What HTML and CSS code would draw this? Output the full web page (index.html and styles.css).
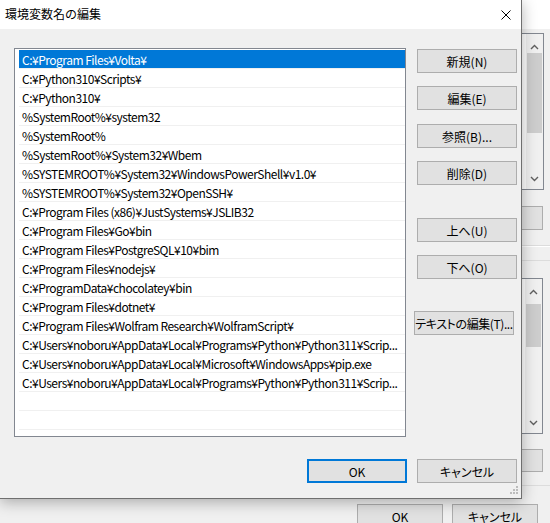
FILE: index.html
```html
<!DOCTYPE html>
<html lang="ja">
<head>
    <meta charset="UTF-8">
    <meta name="viewport" content="width=device-width, initial-scale=1.0">
    <title>環境変数名の編集</title>
    <link rel="stylesheet" href="styles.css">
</head>
<body>
    <!-- 後ろの「環境変数」ウィンドウ -->
    <div class="parent">
        <div class="parent-title"></div>
        <div class="group group-user">
            <div class="var-list">
                <div class="var-rows"></div>
                <div class="scrollbar">
                    <div class="sb-arrow"><svg width="9" height="6" viewBox="0 0 9 6"><polyline points="1,5 4.5,1.5 8,5" fill="none" stroke="#606060" stroke-width="1.4"/></svg></div>
                    <div class="sb-track"><div class="sb-thumb thumb-user"></div></div>
                    <div class="sb-arrow"><svg width="9" height="6" viewBox="0 0 9 6"><polyline points="1,1 4.5,4.5 8,1" fill="none" stroke="#606060" stroke-width="1.4"/></svg></div>
                </div>
            </div>
            <div class="group-buttons">
                <button class="btn"></button>
                <button class="btn"></button>
                <button class="btn"></button>
            </div>
        </div>
        <div class="group group-system">
            <div class="var-list var-list-system">
                <div class="var-rows"></div>
                <div class="scrollbar">
                    <div class="sb-arrow"><svg width="9" height="6" viewBox="0 0 9 6"><polyline points="1,5 4.5,1.5 8,5" fill="none" stroke="#606060" stroke-width="1.4"/></svg></div>
                    <div class="sb-track"><div class="sb-thumb thumb-system"></div></div>
                    <div class="sb-arrow"><svg width="9" height="6" viewBox="0 0 9 6"><polyline points="1,1 4.5,4.5 8,1" fill="none" stroke="#606060" stroke-width="1.4"/></svg></div>
                </div>
            </div>
            <div class="group-buttons group-buttons-system">
                <button class="btn"></button>
                <button class="btn"></button>
                <button class="btn"></button>
            </div>
        </div>
        <div class="parent-footer">
            <button class="btn btn-parent">OK</button>
            <button class="btn btn-parent">キャンセル</button>
        </div>
    </div>

    <!-- 手前のダイアログ -->
    <div class="dialog">
        <div class="dialog-title">
            <span class="title-text">環境変数名の編集</span>
            <span class="close-btn"><svg width="10" height="10" viewBox="0 0 10 10"><path d="M0.5 0.5 L9.5 9.5 M9.5 0.5 L0.5 9.5" stroke="#000" stroke-width="1"/></svg></span>
        </div>
        <div class="dialog-body">
            <div class="dialog-main">
                <ul class="path-list">
                    <li class="selected">C:¥Program Files¥Volta¥</li>
                    <li>C:¥Python310¥Scripts¥</li>
                    <li>C:¥Python310¥</li>
                    <li>%SystemRoot%¥system32</li>
                    <li>%SystemRoot%</li>
                    <li>%SystemRoot%¥System32¥Wbem</li>
                    <li>%SYSTEMROOT%¥System32¥WindowsPowerShell¥v1.0¥</li>
                    <li>%SYSTEMROOT%¥System32¥OpenSSH¥</li>
                    <li>C:¥Program Files (x86)¥JustSystems¥JSLIB32</li>
                    <li>C:¥Program Files¥Go¥bin</li>
                    <li>C:¥Program Files¥PostgreSQL¥10¥bim</li>
                    <li>C:¥Program Files¥nodejs¥</li>
                    <li>C:¥ProgramData¥chocolatey¥bin</li>
                    <li>C:¥Program Files¥dotnet¥</li>
                    <li>C:¥Program Files¥Wolfram Research¥WolframScript¥</li>
                    <li>C:¥Users¥noboru¥AppData¥Local¥Programs¥Python¥Python311¥Scrip...</li>
                    <li>C:¥Users¥noboru¥AppData¥Local¥Microsoft¥WindowsApps¥pip.exe</li>
                    <li>C:¥Users¥noboru¥AppData¥Local¥Programs¥Python¥Python311¥Scrip...</li>
                    <li></li>
                    <li></li>
                    <li></li>
                </ul>
                <div class="side-buttons">
                    <button class="btn">新規(N)</button>
                    <button class="btn">編集(E)</button>
                    <button class="btn">参照(B)...</button>
                    <button class="btn">削除(D)</button>
                    <button class="btn btn-up">上へ(U)</button>
                    <button class="btn">下へ(O)</button>
                    <button class="btn btn-text">テキストの編集(T)...</button>
                </div>
            </div>
            <div class="dialog-footer">
                <button class="btn btn-default">OK</button>
                <button class="btn">キャンセル</button>
            </div>
        </div>
        <svg class="grip" width="8" height="8" viewBox="0 0 8 8">
            <rect x="6" y="0" width="2" height="2" fill="#bcbcbc"/>
            <rect x="3" y="3" width="2" height="2" fill="#bcbcbc"/>
            <rect x="6" y="3" width="2" height="2" fill="#bcbcbc"/>
            <rect x="0" y="6" width="2" height="2" fill="#bcbcbc"/>
            <rect x="3" y="6" width="2" height="2" fill="#bcbcbc"/>
            <rect x="6" y="6" width="2" height="2" fill="#bcbcbc"/>
        </svg>
    </div>
</body>
</html>
```

FILE: styles.css
```css
html, body {
    margin: 0;
    width: 550px;
    height: 523px;
    overflow: hidden;
}
body {
    position: relative;
    background: #f0f0f0;
    font-family: "Noto Sans CJK JP", "Noto Sans", sans-serif;
    font-size: 12px;
    font-feature-settings: "palt";
    color: #000;
}

/* ボタン共通 */
.btn {
    box-sizing: border-box;
    width: 100px;
    height: 24px;
    padding: 0;
    background: #e1e1e1;
    border: 1px solid #adadad;
    font: inherit;
    color: #000;
    white-space: nowrap;
}

/* 後ろのウィンドウ */
.parent {
    width: 560px;
}
.parent-title {
    height: 29px;
    background: #fff;
}
.group {
    padding-left: 12px;
    padding-right: 16px;
}
.group-user {
    padding-top: 4px;
    padding-bottom: 15px;
    border-bottom: 1px solid #dcdcdc;
    box-shadow: 0 1px 0 #fff;
}
.group-system {
    margin-top: 14px;
    padding-top: 17px;
    padding-bottom: 13px;
    border-top: 1px solid #dcdcdc;
    border-bottom: 1px solid #dcdcdc;
}
.var-list {
    display: flex;
    height: 155px;
    border: 1px solid #828790;
    background: #fff;
}
.var-list-system {
    height: 154px;
    margin-right: 1px;
}
.var-rows {
    flex: 1;
}
.scrollbar {
    width: 17px;
    display: flex;
    flex-direction: column;
    background: #f0f0f0;
}
.sb-arrow {
    height: 17px;
    display: flex;
    align-items: center;
    justify-content: center;
}
.sb-arrow:first-child {
    padding-top: 4px;
}
.sb-arrow:last-child {
    padding-bottom: 2px;
}
.sb-track {
    flex: 1;
}
.sb-thumb {
    margin: 0 1px;
    background: #cdcdcd;
}
.thumb-user {
    height: 80px;
    margin-top: -2px;
}
.thumb-system {
    height: 43px;
    margin-top: 4px;
}
.group-buttons {
    display: flex;
    justify-content: flex-end;
    gap: 10px;
    margin-top: 16px;
    margin-right: 1px;
}
.group-buttons-system {
    margin-top: 15px;
}
.group-buttons .btn {
    width: 88px;
}
.group-buttons-system .btn {
    height: 23px;
}
.parent-footer {
    display: flex;
    justify-content: flex-end;
    gap: 9px;
    margin-top: 18px;
    margin-right: 22px;
}
.btn-parent {
    width: 86px;
}

/* 環境変数名の編集ダイアログ */
.dialog {
    position: absolute;
    left: 0;
    top: 0;
    width: 521px;
    height: 498px;
    display: flex;
    flex-direction: column;
    background: #f0f0f0;
    border-right: 1px solid #6f6f6f;
    border-bottom: 1px solid #6f6f6f;
    box-shadow: 0 3px 14px rgba(0, 0, 0, 0.3);
}
.dialog-title {
    height: 29px;
    flex: none;
    display: flex;
    align-items: center;
    justify-content: space-between;
    padding: 0 10px 2px 5px;
    background: #fff;
    box-sizing: border-box;
}
.title-text {
    font-feature-settings: normal;
}
.close-btn {
    display: flex;
    margin-top: 2px;
}
.dialog-body {
    flex: 1;
    padding: 19px 4px 0 14px;
}
.dialog-main {
    display: flex;
    gap: 11px;
    height: 389px;
}
.path-list {
    box-sizing: border-box;
    width: 392px;
    height: 389px;
    margin: 0;
    padding: 1px 0 0 4px;
    list-style: none;
    overflow: hidden;
    background: #fff;
    border: 1px solid #828790;
}
.path-list li {
    box-sizing: border-box;
    height: 19px;
    line-height: 19px;
    padding-left: 3px;
    letter-spacing: -0.5px;
    border-bottom: 1px solid #f0f0f0;
    white-space: nowrap;
    overflow: hidden;
}
.path-list li.selected {
    background: #0078d7;
    color: #fff;
}
.side-buttons {
    display: flex;
    flex-direction: column;
    width: 100px;
}
.side-buttons .btn {
    margin-top: 13px;
}
.side-buttons .btn:nth-child(1) {
    margin-top: 1px;
}
.side-buttons .btn:nth-child(3) {
    margin-top: 14px;
}
.side-buttons .btn-up {
    margin-top: 33px;
}
.side-buttons .btn-text {
    margin-top: 32px;
    margin-left: -3px;
    letter-spacing: -0.4px;
}
.dialog-footer {
    display: flex;
    justify-content: flex-end;
    gap: 10px;
    margin-top: 22px;
}
.btn-default {
    border: 2px solid #0078d7;
}
.grip {
    position: absolute;
    right: 3px;
    bottom: 4px;
}
```
